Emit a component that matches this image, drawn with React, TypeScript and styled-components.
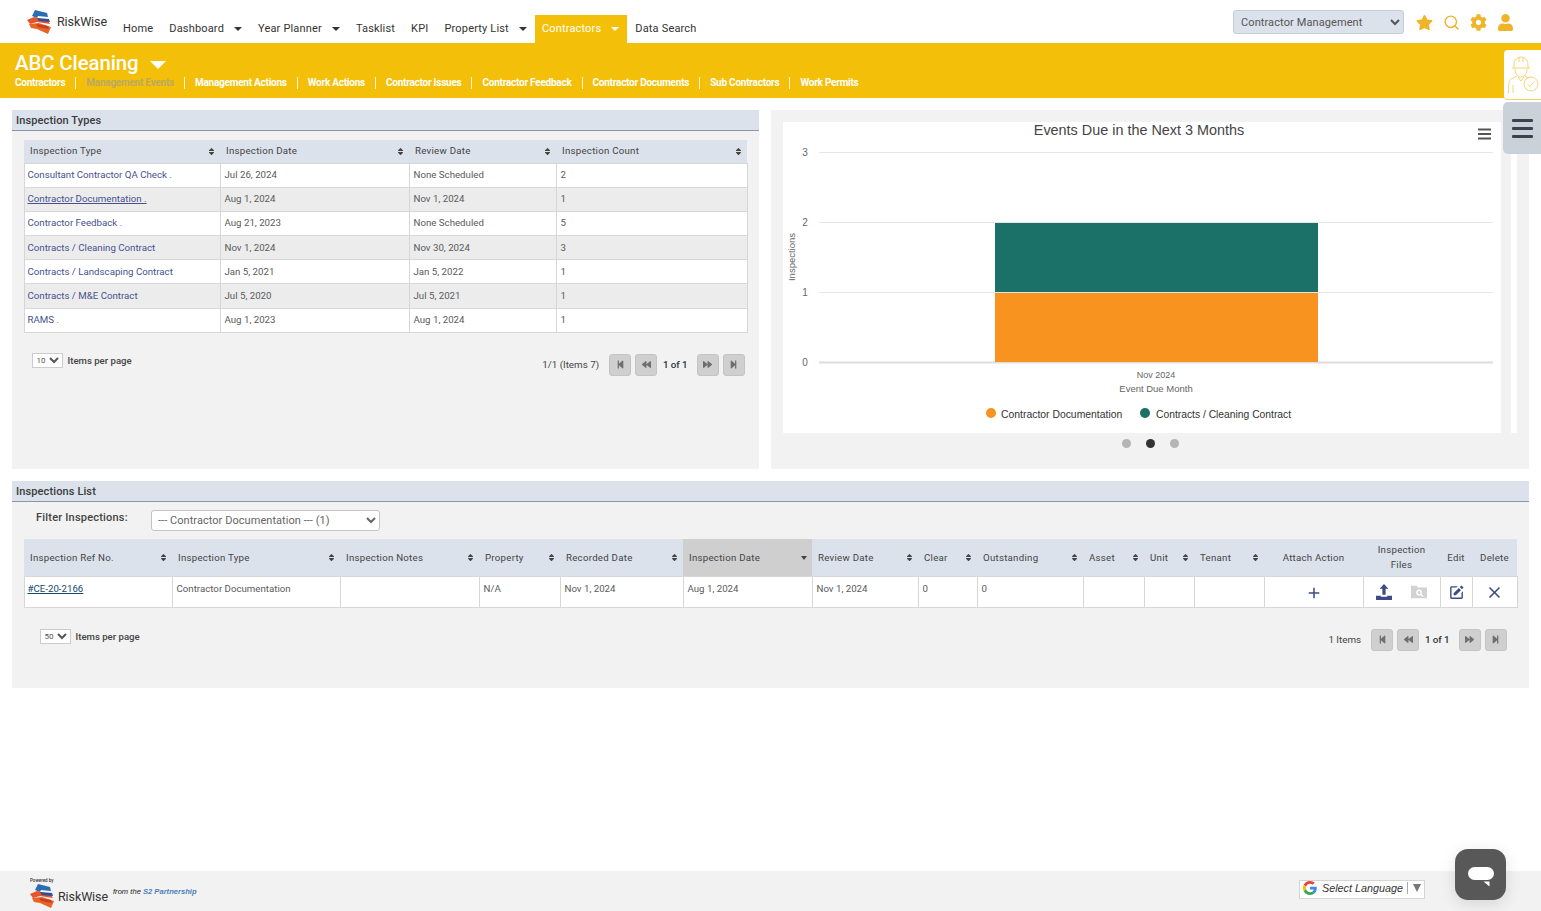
import styled, { createGlobalStyle } from "styled-components";
import {
  FaStar,
  FaCog,
  FaUser,
  FaSort,
  FaStepBackward,
  FaStepForward,
  FaBackward,
  FaForward,
} from "react-icons/fa";
import { FiSearch } from "react-icons/fi";
import { MdClose, MdAdd } from "react-icons/md";
import { BiSolidEdit } from "react-icons/bi";

// ---------- data ----------
const NAV = [
  { label: "Home" },
  { label: "Dashboard", caret: true },
  { label: "Year Planner", caret: true },
  { label: "Tasklist" },
  { label: "KPI" },
  { label: "Property List", caret: true },
  { label: "Contractors", caret: true, active: true },
  { label: "Data Search" },
];

const SUB_NAV = [
  "Contractors",
  "Management Events",
  "Management Actions",
  "Work Actions",
  "Contractor Issues",
  "Contractor Feedback",
  "Contractor Documents",
  "Sub Contractors",
  "Work Permits",
];

const TYPE_COLS = [
  { label: "Inspection Type", w: 196 },
  { label: "Inspection Date", w: 189 },
  { label: "Review Date", w: 147 },
  { label: "Inspection Count", w: 191 },
];

const TYPE_ROWS = [
  ["Consultant Contractor QA Check .", "Jul 26, 2024", "None Scheduled", "2"],
  ["Contractor Documentation .", "Aug 1, 2024", "Nov 1, 2024", "1"],
  ["Contractor Feedback .", "Aug 21, 2023", "None Scheduled", "5"],
  ["Contracts / Cleaning Contract", "Nov 1, 2024", "Nov 30, 2024", "3"],
  ["Contracts / Landscaping Contract", "Jan 5, 2021", "Jan 5, 2022", "1"],
  ["Contracts / M&E Contract", "Jul 5, 2020", "Jul 5, 2021", "1"],
  ["RAMS .", "Aug 1, 2023", "Aug 1, 2024", "1"],
];

const LIST_COLS = [
  { label: "Inspection Ref No.", w: 148, sort: true },
  { label: "Inspection Type", w: 168, sort: true },
  { label: "Inspection Notes", w: 139, sort: true },
  { label: "Property", w: 81, sort: true },
  { label: "Recorded Date", w: 123, sort: true },
  { label: "Inspection Date", w: 129, sort: true, sorted: true },
  { label: "Review Date", w: 106, sort: true },
  { label: "Clear", w: 59, sort: true },
  { label: "Outstanding", w: 106, sort: true },
  { label: "Asset", w: 61, sort: true },
  { label: "Unit", w: 50, sort: true },
  { label: "Tenant", w: 70, sort: true },
  { label: "Attach Action", w: 99, center: true },
  { label: "Inspection Files", w: 77, center: true },
  { label: "Edit", w: 32, center: true },
  { label: "Delete", w: 45, center: true },
];

const LIST_ROW = [
  "",
  "Contractor Documentation",
  "",
  "N/A",
  "Nov 1, 2024",
  "Aug 1, 2024",
  "Nov 1, 2024",
  "0",
  "0",
  "",
  "",
  "",
];

// ---------- page ----------
const GlobalStyle = createGlobalStyle`
  html, body { margin: 0; padding: 0; background: #fff; }
  body { font-family: Roboto, "Liberation Sans", sans-serif; color: #333; }
  * { box-sizing: border-box; }
`;

const Page = styled.div`
  position: relative;
  height: 911px;
  display: flex;
  flex-direction: column;
  overflow: hidden;
`;

// ---------- top bar ----------
const TopBar = styled.header`
  height: 43px;
  display: flex;
  align-items: flex-end;
  padding-left: 27px;
  padding-right: 26px;
`;

const LogoLink = styled.div`
  width: 88px;
  height: 43px;
  display: flex;
  align-items: center;
  gap: 5px;
  flex: none;
`;

const LogoText = styled.span`
  font-size: 12.5px;
  color: #333;
  letter-spacing: -0.1px;
`;

const NavList = styled.nav`
  display: flex;
  align-items: stretch;
  height: 28px;
`;

const NavItem = styled.div<{ $active?: boolean }>`
  display: flex;
  align-items: center;
  padding: 0 8px 1px ${(p) => (p.$active ? 7 : 8)}px;
  font-size: 11px;
  letter-spacing: 0.17px;
  white-space: nowrap;
  color: ${(p) => (p.$active ? "#fff" : "#333")};
  background: ${(p) => (p.$active ? "#f4bf08" : "transparent")};
`;

const Caret = styled.span`
  display: inline-block;
  width: 0;
  height: 0;
  margin-left: 10px;
  border-left: 4px solid transparent;
  border-right: 4px solid transparent;
  border-top: 4px solid currentColor;
`;

const TitleCaret = styled(Caret)`
  margin-left: 12px;
  margin-top: 4px;
  border-left-width: 8px;
  border-right-width: 8px;
  border-top-width: 8px;
`;

const SortCaret = styled(Caret)`
  margin: 0 1px 0 0;
  border-left-width: 3.5px;
  border-right-width: 3.5px;
  border-top-width: 4px;
  color: #444;
`;

const TopRight = styled.div`
  margin-left: auto;
  height: 43px;
  display: flex;
  align-items: center;
  padding-top: 1px;
`;

const ModuleSelect = styled.select`
  width: 171px;
  height: 24px;
  margin-right: 12px;
  padding-left: 3px;
  background: #dbe2ec;
  border: 1px solid #c6cdd6;
  border-radius: 3px;
  font: 11px Roboto, sans-serif;
  letter-spacing: 0.1px;
  color: #555;
`;

const IconRow = styled.div`
  display: flex;
  align-items: center;
  gap: 10px;
  padding-right: 1px;
  color: #f0b429;

  svg {
    display: block;
    width: 17px;
    height: 17px;
  }
`;

// ---------- yellow band ----------
const Band = styled.section`
  height: 55px;
  background: #f4bf08;
  padding: 8px 0 0 15px;
  color: #fff;
`;

const BandTitle = styled.div`
  display: flex;
  align-items: center;
  height: 24px;
  font-size: 20.4px;
  font-weight: 500;
  line-height: 24px;
  letter-spacing: -0.1px;
`;

const SubNav = styled.div`
  display: flex;
  align-items: center;
  margin-top: 2px;
  height: 12px;
`;

const SubNavItem = styled.span<{ $muted?: boolean }>`
  padding: 0 10px;
  font-size: 10px;
  font-weight: 700;
  line-height: 12px;
  letter-spacing: -0.24px;
  white-space: nowrap;
  border-right: 1px solid rgba(255, 255, 255, 0.85);
  color: ${(p) => (p.$muted ? "#bba95f" : "#fff")};

  &:first-child {
    padding-left: 0;
  }
  &:last-child {
    border-right: 0;
  }
`;

const ContractorTab = styled.div`
  position: absolute;
  top: 50px;
  right: 0;
  width: 37px;
  height: 50px;
  background: #fff;
  border-bottom: 1px solid #f4d469;
  border-radius: 4px 0 0 4px;
  display: flex;
  align-items: center;
  justify-content: center;
`;

const MenuTab = styled.div`
  position: absolute;
  top: 102px;
  right: 0;
  width: 38px;
  height: 52px;
  background: #cbd1d9;
  border-radius: 5px 0 0 5px;
  display: flex;
  flex-direction: column;
  justify-content: center;
  gap: 5px;
  padding-left: 9px;
`;

const MenuBar = styled.span`
  display: block;
  width: 21px;
  height: 3px;
  border-radius: 1px;
  background: #3b4250;
`;

// ---------- content ----------
const Content = styled.main`
  flex: 1;
  padding: 12px 12px 0;
  display: flex;
  flex-direction: column;
  gap: 12px;
`;

const TopPanels = styled.div`
  display: flex;
  gap: 12px;
  height: 359px;
`;

const Panel = styled.section<{ $w?: number }>`
  ${(p) => (p.$w ? `width: ${p.$w}px;` : "flex: 1;")}
  background: #f2f2f2;
`;

const ListPanel = styled(Panel)`
  flex: none;
  height: 207px;
`;

const PanelTitle = styled.h3`
  margin: 0;
  height: 21px;
  padding-left: 4px;
  background: #dbe2ec;
  border-bottom: 1px solid #8b95a3;
  font-size: 11px;
  font-weight: 500;
  line-height: 22px;
  letter-spacing: 0.12px;
  color: #3a3a3a;
`;

const TableWrap = styled.div<{ $top: number }>`
  margin: ${(p) => p.$top}px 12.5px 0 11.5px;
`;

const Table = styled.table`
  width: 100%;
  table-layout: fixed;
  border-collapse: collapse;
  font-size: 9.7px;
`;

const Th = styled.th<{ $w: number; $sorted?: boolean; $center?: boolean; $h: number; $drop?: number }>`
  width: ${(p) => p.$w}px;
  height: ${(p) => p.$h}px;
  padding: ${(p) => p.$drop ?? 0}px 4px 0 ${(p) => (p.$center ? 4 : 6)}px;
  background: ${(p) => (p.$sorted ? "#cfcfcf" : "#dbe2ec")};
  font-weight: 400;
  line-height: 14.5px;
  letter-spacing: 0.25px;
  color: #444;
  text-align: ${(p) => (p.$center ? "center" : "left")};
`;

const ThInner = styled.div`
  display: flex;
  align-items: center;
  justify-content: space-between;

  svg {
    flex: none;
    width: 9px;
    height: 9px;
    color: #444;
  }
`;

const Td = styled.td<{ $h: number; $center?: boolean; $raise?: number; $drop?: number }>`
  height: ${(p) => p.$h}px;
  padding: ${(p) => p.$drop ?? 0}px 4px ${(p) => p.$raise ?? 1}px;
  border: 1px solid #d6d6d6;
  color: #5a5a5a;
  white-space: nowrap;
  text-align: ${(p) => (p.$center ? "center" : "left")};

  &:first-child {
    padding-left: 3px;
  }
`;

const Tr = styled.tr<{ $odd?: boolean }>`
  background: ${(p) => (p.$odd ? "#ececec" : "#fff")};
`;

const CellLink = styled.a<{ $hover?: boolean; $dark?: boolean }>`
  color: ${(p) => (p.$dark ? "#174a6a" : "#465290")};
  text-decoration: ${(p) => (p.$hover ? "underline" : "none")};
`;

const Pager = styled.div<{ $top: number; $left: number; $right: number }>`
  display: flex;
  align-items: flex-start;
  justify-content: space-between;
  margin-top: ${(p) => p.$top}px;
  padding-left: ${(p) => p.$left}px;
  padding-right: ${(p) => p.$right}px;
`;

const PerPage = styled.div`
  display: flex;
  align-items: center;
  gap: 5px;
  font-size: 9.6px;
  font-weight: 500;
  color: #444;
`;

const PerPageSelect = styled.select`
  width: 31px;
  height: 15px;
  padding: 0;
  background: #fff;
  border: 1px solid #ccc;
  font: 8px Roboto, sans-serif;
  color: #555;
`;

const PagerRight = styled.div<{ $drop?: number }>`
  display: flex;
  align-items: center;
  margin-top: ${(p) => p.$drop ?? 0}px;
  font-size: 9.8px;
  color: #444;
`;

const PagerInfo = styled.span`
  margin-right: 10px;
`;

const PagerCount = styled.span`
  margin: 0 9px 0 2px;
  font-weight: 500;
  letter-spacing: -0.1px;
  color: #333;
`;

const PageBtn = styled.button`
  width: 22px;
  height: 22px;
  padding: 0;
  margin-right: 4px;
  display: flex;
  align-items: center;
  justify-content: center;
  background: #cfcfcf;
  border: 1px solid #c4c4c4;
  border-radius: 3px;
  color: #6e6e6e;

  &:last-child {
    margin-right: 0;
  }
  svg {
    width: 9px;
    height: 9px;
  }
`;

// ---------- chart ----------
const ChartCard = styled.div`
  padding: 12px 12px 0;
  display: flex;
  gap: 10px;
`;

const ChartBody = styled.div`
  width: 718px;
  height: 311px;
  background: #fff;
  flex: none;
`;

const NextSlide = styled.div`
  width: 6px;
  height: 311px;
  background: #fff;
`;

const Dots = styled.div`
  display: flex;
  justify-content: center;
  gap: 15px;
  margin-top: 6px;
`;

const Dot = styled.span<{ $on?: boolean }>`
  width: 9px;
  height: 9px;
  border-radius: 50%;
  background: ${(p) => (p.$on ? "#333" : "#b5b5b5")};
`;

const ChartText = styled.text<{ $size?: number; $fill?: string }>`
  font-family: "Liberation Sans", Arial, sans-serif;
  font-size: ${(p) => p.$size ?? 9.5}px;
  fill: ${(p) => p.$fill ?? "#666"};
`;

// ---------- list panel ----------
const FilterRow = styled.div`
  display: flex;
  align-items: center;
  height: 37px;
  padding-left: 24px;
`;

const FilterLabel = styled.label`
  width: 115px;
  margin-bottom: 6px;
  font-size: 11px;
  font-weight: 500;
  letter-spacing: 0.2px;
  color: #444;
`;

const FilterSelect = styled.select`
  width: 229px;
  height: 21px;
  padding-left: 2px;
  background: #fff;
  border: 1px solid #c4c4c4;
  border-radius: 3px;
  font: 11px Roboto, sans-serif;
  letter-spacing: 0.05px;
  color: #666;
`;

const ActionIcon = styled.span<{ $color?: string; $size?: number }>`
  display: inline-flex;
  vertical-align: middle;
  color: ${(p) => p.$color ?? "#3d4a86"};

  svg {
    width: ${(p) => p.$size ?? 16}px;
    height: ${(p) => p.$size ?? 16}px;
  }
`;

const FilesCell = styled.div`
  display: flex;
  justify-content: center;
  align-items: flex-start;
  gap: 19px;
`;

// ---------- footer ----------
const Footer = styled.footer`
  height: 40px;
  background: #f2f2f2;
  display: flex;
  align-items: flex-start;
  padding-left: 30px;
  padding-right: 116px;
`;

const PoweredBlock = styled.div`
  display: flex;
  flex-direction: column;
  padding-top: 6px;
  width: 83px;
`;

const Powered = styled.span`
  font-size: 4.5px;
  line-height: 7px;
  font-weight: 500;
  color: #333;
`;

const PoweredLogo = styled.div`
  display: flex;
  align-items: center;
  gap: 3px;
`;

const FromText = styled.span`
  margin-top: 16px;
  font-family: "Liberation Sans", sans-serif;
  font-size: 7.6px;
  font-style: italic;
  color: #222;

  b {
    color: #4d7fb8;
  }
`;

const Translate = styled.div`
  margin-left: auto;
  margin-top: 9px;
  width: 126px;
  height: 19px;
  display: flex;
  align-items: center;
  gap: 5px;
  padding: 0 0 3px 3px;
  background: #fff;
  border: 1px solid #d5d5d5;
  font-family: "Liberation Sans", sans-serif;
  font-size: 10.8px;
  font-style: italic;
  color: #333;
`;

const TranslateArrow = styled.span`
  margin-left: -1px;
  padding-left: 5px;
  border-left: 1px solid #aaa;
  height: 12px;
  display: flex;
  align-items: center;

  &::after {
    content: "";
    width: 0;
    height: 0;
    border-left: 4px solid transparent;
    border-right: 4px solid transparent;
    border-top: 8px solid #777;
  }
`;

const ChatButton = styled.div`
  position: absolute;
  left: 1455px;
  top: 849px;
  width: 51px;
  height: 51px;
  border-radius: 13px;
  background: #585858;
  box-shadow: 0 4px 16px rgba(0, 0, 0, 0.12);
  display: flex;
  align-items: center;
  justify-content: center;
`;

// ---------- drawings ----------
function Logo() {
  return (
    <svg width="25" height="24" viewBox="0 0 25 24">
      <path d="M8 0 L20 3 L21 7 L11 6 L10 8 L5 6 Z" fill="#2a6db5" />
      <path d="M0 10 L7 7 L21 11 L23 14 L10 12 L3 14 Z" fill="#e8532b" />
      <path d="M10 8 L22 9 L23 12 L12 11 Z" fill="#2b4f94" />
      <path d="M2 14 L12 13 L24 17 L21 24 L10 19 L4 18 Z" fill="#e8622a" />
      <path d="M9 14 L21 16 L22 19 L11 17 Z" fill="#c9401f" />
    </svg>
  );
}

function ContractorIcon() {
  return (
    <svg width="32" height="38" viewBox="0 0 32 38" fill="none" stroke="#f2cf6a" strokeWidth="0.9">
      <path d="M7 12 V8 a7 7 0 0 1 14 0 V12" />
      <path d="M5 12 H23 M12 1.5 V6 M16 1.5 V6" />
      <path d="M8 13 c0 5 3 8 6 8 s6 -3 6 -8" />
      <path d="M10 20 L4 23 C2 24 1.5 27 1.5 37 M18 20 L22 22 M6 29 V37 M11 21 L14 25 L17 21" />
      <circle cx="24" cy="28" r="7" />
      <path d="M21 28.5 l2 2 l4 -5" />
    </svg>
  );
}

function UploadIcon() {
  return (
    <svg width="15" height="15" viewBox="0 0 15 15" fill="#3d4a86">
      <path d="M7.5 0 L11.5 4.5 H9 V10 H6 V4.5 H3.5 Z" />
      <path d="M0 11 H4.5 V12 H10.5 V11 H15 V15 H0 Z" />
    </svg>
  );
}

function FolderSearchIcon() {
  return (
    <svg width="14" height="11" viewBox="0 0 14 11" fill="#d2d2d2">
      <path d="M0 0 H5 L6 1.5 H14 V11 H0 Z" />
      <circle cx="7" cy="6" r="2" fill="none" stroke="#fff" strokeWidth="1.2" />
      <path d="M8.5 7.5 L10.5 9.5" stroke="#fff" strokeWidth="1.2" />
    </svg>
  );
}

function GoogleG() {
  return (
    <svg width="14" height="14" viewBox="0 0 48 48">
      <path fill="#EA4335" d="M24 9.5c3.5 0 6.7 1.2 9.2 3.6l6.9-6.9C35.9 2.4 30.5 0 24 0 14.6 0 6.5 5.4 2.6 13.2l8 6.2C12.5 13.6 17.8 9.5 24 9.5z" />
      <path fill="#4285F4" d="M47 24.5c0-1.6-.1-3.1-.4-4.5H24v9h12.9c-.6 3-2.2 5.5-4.7 7.2l7.7 6C44.4 38 47 31.8 47 24.5z" />
      <path fill="#FBBC05" d="M10.6 28.6c-.5-1.4-.8-3-.8-4.6s.3-3.2.8-4.6l-8-6.2C.9 16.5 0 20.1 0 24s.9 7.5 2.6 10.8l8-6.2z" />
      <path fill="#34A853" d="M24 48c6.5 0 11.9-2.1 15.9-5.8l-7.7-6c-2.2 1.5-5 2.3-8.2 2.3-6.2 0-11.5-4.1-13.4-9.9l-8 6.2C6.5 42.6 14.6 48 24 48z" />
    </svg>
  );
}

function EventsChart() {
  return (
    <svg width="718" height="311" viewBox="0 0 718 311">
      <ChartText x="356" y="13" textAnchor="middle" $size={14.4} $fill="#444">
        Events Due in the Next 3 Months
      </ChartText>
      <path d="M695 7.5 H708 M695 12 H708 M695 16.5 H708" stroke="#555" strokeWidth="2" />
      {[30, 100, 170].map((y) => (
        <line key={y} x1="36" x2="710" y1={y + 0.5} y2={y + 0.5} stroke="#e6e6e6" />
      ))}
      <line x1="36" x2="710" y1="240.5" y2="240.5" stroke="#ddd" strokeWidth="2" />
      {["3", "2", "1", "0"].map((t, i) => (
        <ChartText key={t} x="22" y={33.5 + i * 70} textAnchor="middle" $size={10}>
          {t}
        </ChartText>
      ))}
      <ChartText x="0" y="0" textAnchor="middle" transform="translate(12 135) rotate(-90)">
        Inspections
      </ChartText>
      <rect x="212" y="101" width="323" height="69" fill="#1b7068" />
      <rect x="212" y="171" width="323" height="69" fill="#f8931f" />
      <ChartText x="373" y="256" textAnchor="middle" $size={9}>
        Nov 2024
      </ChartText>
      <ChartText x="373" y="270" textAnchor="middle">
        Event Due Month
      </ChartText>
      <circle cx="208" cy="291" r="5" fill="#f7931e" />
      <ChartText x="218" y="296" $size={10.4} $fill="#333">
        Contractor Documentation
      </ChartText>
      <circle cx="362" cy="291" r="5" fill="#1b7068" />
      <ChartText x="373" y="296" $size={10.3} $fill="#333">
        Contracts / Cleaning Contract
      </ChartText>
    </svg>
  );
}

function PagerButtons({ info, drop }: { info: string; drop?: number }) {
  return (
    <PagerRight $drop={drop}>
      <PagerInfo>{info}</PagerInfo>
      <PageBtn>
        <FaStepBackward />
      </PageBtn>
      <PageBtn>
        <FaBackward />
      </PageBtn>
      <PagerCount>1 of 1</PagerCount>
      <PageBtn>
        <FaForward />
      </PageBtn>
      <PageBtn>
        <FaStepForward />
      </PageBtn>
    </PagerRight>
  );
}

export default function App() {
  return (
    <Page>
      <GlobalStyle />
      <TopBar>
        <LogoLink>
          <Logo />
          <LogoText>RiskWise</LogoText>
        </LogoLink>
        <NavList>
          {NAV.map((item) => (
            <NavItem key={item.label} $active={item.active}>
              {item.label}
              {item.caret && <Caret />}
            </NavItem>
          ))}
        </NavList>
        <TopRight>
          <ModuleSelect defaultValue="Contractor Management">
            <option>Contractor Management</option>
          </ModuleSelect>
          <IconRow>
            <FaStar />
            <FiSearch />
            <FaCog />
            <FaUser />
          </IconRow>
        </TopRight>
      </TopBar>

      <Band>
        <BandTitle>
          ABC Cleaning
          <TitleCaret />
        </BandTitle>
        <SubNav>
          {SUB_NAV.map((label) => (
            <SubNavItem key={label} $muted={label === "Management Events"}>
              {label}
            </SubNavItem>
          ))}
        </SubNav>
      </Band>

      <ContractorTab>
        <ContractorIcon />
      </ContractorTab>
      <MenuTab>
        <MenuBar />
        <MenuBar />
        <MenuBar />
      </MenuTab>

      <Content>
        <TopPanels>
          <Panel $w={747}>
            <PanelTitle>Inspection Types</PanelTitle>
            <TableWrap $top={9}>
              <Table>
                <thead>
                  <tr>
                    {TYPE_COLS.map((c) => (
                      <Th key={c.label} $w={c.w} $h={23}>
                        <ThInner>
                          {c.label}
                          <FaSort />
                        </ThInner>
                      </Th>
                    ))}
                  </tr>
                </thead>
                <tbody>
                  {TYPE_ROWS.map((row, i) => (
                    <Tr key={row[0]} $odd={i % 2 === 1}>
                      {row.map((cell, j) => (
                        <Td key={j} $h={24.2}>
                          {j === 0 ? <CellLink $hover={i === 1}>{cell}</CellLink> : cell}
                        </Td>
                      ))}
                    </Tr>
                  ))}
                </tbody>
              </Table>
              <Pager $top={20} $left={8} $right={2}>
                <PerPage>
                  <PerPageSelect defaultValue="10">
                    <option>10</option>
                  </PerPageSelect>
                  Items per page
                </PerPage>
                <PagerButtons info="1/1 (Items 7)" drop={1} />
              </Pager>
            </TableWrap>
          </Panel>

          <Panel>
            <ChartCard>
              <ChartBody>
                <EventsChart />
              </ChartBody>
              <NextSlide />
            </ChartCard>
            <Dots>
              <Dot />
              <Dot $on />
              <Dot />
            </Dots>
          </Panel>
        </TopPanels>

        <ListPanel>
          <PanelTitle>Inspections List</PanelTitle>
          <FilterRow>
            <FilterLabel>Filter Inspections:</FilterLabel>
            <FilterSelect defaultValue="c">
              <option value="c">--- Contractor Documentation --- (1)</option>
            </FilterSelect>
          </FilterRow>
          <TableWrap $top={0}>
            <Table>
              <thead>
                <tr>
                  {LIST_COLS.map((c) => (
                    <Th key={c.label} $w={c.w} $h={37} $drop={1} $center={c.center} $sorted={c.sorted}>
                      {c.sort ? (
                        <ThInner>
                          {c.label}
                          {c.sorted ? <SortCaret /> : <FaSort />}
                        </ThInner>
                      ) : (
                        c.label
                      )}
                    </Th>
                  ))}
                </tr>
              </thead>
              <tbody>
                <Tr>
                  {LIST_ROW.map((cell, i) => (
                    <Td key={i} $h={31} $raise={6}>
                      {i === 0 ? (
                        <CellLink $hover $dark>
                          #CE-20-2166
                        </CellLink>
                      ) : (
                        cell
                      )}
                    </Td>
                  ))}
                  <Td $h={31} $center $drop={3}>
                    <ActionIcon $size={18}>
                      <MdAdd />
                    </ActionIcon>
                  </Td>
                  <Td $h={31} $center $drop={2}>
                    <FilesCell>
                      <ActionIcon>
                        <UploadIcon />
                      </ActionIcon>
                      <ActionIcon>
                        <FolderSearchIcon />
                      </ActionIcon>
                    </FilesCell>
                  </Td>
                  <Td $h={31} $center $drop={3}>
                    <ActionIcon $size={17}>
                      <BiSolidEdit />
                    </ActionIcon>
                  </Td>
                  <Td $h={31} $center $drop={3}>
                    <ActionIcon $size={19}>
                      <MdClose />
                    </ActionIcon>
                  </Td>
                </Tr>
              </tbody>
            </Table>
            <Pager $top={21} $left={16} $right={10}>
              <PerPage>
                <PerPageSelect defaultValue="50">
                  <option>50</option>
                </PerPageSelect>
                Items per page
              </PerPage>
              <PagerButtons info="1 Items" />
            </Pager>
          </TableWrap>
        </ListPanel>
      </Content>

      <Footer>
        <PoweredBlock>
          <Powered>Powered by</Powered>
          <PoweredLogo>
            <Logo />
            <LogoText>RiskWise</LogoText>
          </PoweredLogo>
        </PoweredBlock>
        <FromText>
          from the <b>S2 Partnership</b>
        </FromText>
        <Translate>
          <GoogleG />
          Select Language
          <TranslateArrow />
        </Translate>
      </Footer>

      <ChatButton>
        <svg width="28" height="26" viewBox="0 0 28 26">
          <rect x="1" y="5" width="26" height="13" rx="6.5" fill="#fff" />
          <path d="M16.5 19.5 H22.5 V24.5 Z" fill="#fff" />
        </svg>
      </ChatButton>
    </Page>
  );
}
